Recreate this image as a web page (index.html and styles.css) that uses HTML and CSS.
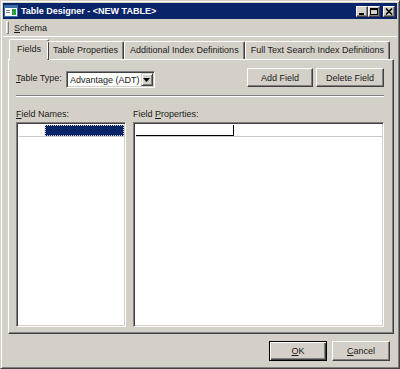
FILE: index.html
```html
<!DOCTYPE html>
<html lang="en">
<head>
    <meta charset="UTF-8">
    <meta name="viewport" content="width=device-width, initial-scale=1.0">
    <title>Table Designer</title>
    <link rel="stylesheet" href="styles.css">
</head>
<body>
    <div class="window">
        <div class="titlebar">
            <svg class="app-icon" width="14" height="12" viewBox="0 0 14 12">
                <rect x="0.5" y="0.5" width="13" height="11" fill="#ffffff" stroke="#3a6ea5"/>
                <rect x="1" y="1" width="12" height="2" fill="#3a6ea5"/>
                <rect x="8" y="4" width="4" height="6" fill="#2e9e3e"/>
                <rect x="2" y="5" width="4" height="1" fill="#808080"/>
                <rect x="2" y="7" width="4" height="1" fill="#808080"/>
            </svg>
            <span class="title">Table Designer - &lt;NEW TABLE&gt;</span>
            <div class="caption-btns">
                <button class="cap-btn">
                    <svg width="8" height="7" viewBox="0 0 8 7"><rect x="1" y="5" width="5" height="2" fill="#000"/></svg>
                </button>
                <button class="cap-btn">
                    <svg width="8" height="7" viewBox="0 0 8 7"><rect x="0.5" y="0.5" width="7" height="6" fill="none" stroke="#000"/><rect x="0" y="0" width="8" height="2" fill="#000"/></svg>
                </button>
                <button class="cap-btn close">
                    <svg width="8" height="7" viewBox="0 0 8 7"><path d="M1 0.5 L7 6.5 M7 0.5 L1 6.5" stroke="#000" stroke-width="1.6"/></svg>
                </button>
            </div>
        </div>

        <div class="menubar">
            <span class="grip"></span>
            <span class="menu-item"><u>S</u>chema</span>
        </div>

        <div class="content">
            <div class="tabs">
                <div class="tab active">Fields</div>
                <div class="tab">Table Properties</div>
                <div class="tab">Additional Index Definitions</div>
                <div class="tab">Full Text Search Index Definitions</div>
            </div>

            <div class="panel">
                <div class="type-row">
                    <span class="field-label"><u>T</u>able Type:</span>
                    <div class="combo">
                        <span class="combo-text">Advantage (ADT)</span>
                        <span class="combo-btn">
                            <svg width="7" height="4" viewBox="0 0 7 4"><path d="M0 0 H7 L3.5 4 Z" fill="#000"/></svg>
                        </span>
                    </div>
                    <div class="spacer"></div>
                    <button class="btn add-btn">Add Field</button>
                    <button class="btn delete-btn">Delete Field</button>
                </div>

                <div class="separator"></div>

                <div class="lists">
                    <div class="list-col names-col">
                        <div class="col-label"><u>F</u>ield Names:</div>
                        <div class="listbox">
                            <div class="grid-row">
                                <span class="row-head"></span>
                                <span class="cell selected"></span>
                            </div>
                        </div>
                    </div>
                    <div class="list-col props-col">
                        <div class="col-label">Field <u>P</u>roperties:</div>
                        <div class="listbox">
                            <div class="grid-row">
                                <span class="cell edit"></span>
                                <span class="cell rest"></span>
                            </div>
                        </div>
                    </div>
                </div>
            </div>
        </div>

        <div class="footer">
            <button class="btn default"><u>O</u>K</button>
            <button class="btn"><u>C</u>ancel</button>
        </div>
    </div>
</body>
</html>
```

FILE: styles.css
```css
* {
    margin: 0;
    padding: 0;
    box-sizing: border-box;
}

body {
    font-family: "Liberation Sans", Arial, sans-serif;
    font-size: 9px;
    color: #1a1a1a;
    background: #d4d0c8;
}

u {
    text-decoration: underline;
    text-underline-offset: 1px;
}

.window {
    width: 400px;
    height: 369px;
    display: flex;
    flex-direction: column;
    background: #d4d0c8;
    border: 1px solid;
    border-color: #d4d0c8 #404040 #404040 #d4d0c8;
    box-shadow: inset 1px 1px 0 #ffffff, inset -1px -1px 0 #808080;
    padding: 2px;
}

/* title bar */
.titlebar {
    height: 16px;
    display: flex;
    align-items: center;
    background: #0a246a;
    padding: 0 2px 0 1px;
}

.app-icon {
    display: block;
    margin-right: 3px;
}

.title {
    color: #ffffff;
    font-weight: bold;
    font-size: 9px;
    flex: 1;
}

.caption-btns {
    display: flex;
}

.cap-btn {
    width: 12px;
    height: 11px;
    display: flex;
    align-items: center;
    justify-content: center;
    background: #d4d0c8;
    border: 1px solid;
    border-color: #ffffff #404040 #404040 #ffffff;
    box-shadow: inset -1px -1px 0 #808080;
}

.cap-btn.close {
    margin-left: 3px;
}

/* menu */
.menubar {
    height: 18px;
    display: flex;
    align-items: center;
    border-bottom: 1px solid #ffffff;
}

.grip {
    width: 3px;
    height: 13px;
    margin-left: 3px;
    border: 1px solid;
    border-color: #ffffff #808080 #808080 #ffffff;
}

.menu-item {
    margin-left: 5px;
}

/* tabs */
.content {
    padding: 2px 3px 0 5px;
}

.tabs {
    display: flex;
    align-items: flex-end;
    height: 20px;
    padding-left: 3px;
    position: relative;
    z-index: 1;
}

.tab {
    height: 18px;
    line-height: 16px;
    padding: 0 5px;
    border: 1px solid;
    border-bottom: none;
    border-color: #ffffff #404040 transparent #ffffff;
    border-radius: 2px 2px 0 0;
    box-shadow: inset -1px 0 0 #808080;
    white-space: nowrap;
}

.tab.active {
    height: 21px;
    line-height: 18px;
    margin: 0 -2px -1px;
    padding: 0 7px;
    background: #d4d0c8;
}

.panel {
    height: 275px;
    border: 1px solid;
    border-color: #ffffff #404040 #404040 #ffffff;
    box-shadow: inset -1px -1px 0 #808080;
    padding: 8px 9px 0 7px;
}

.type-row {
    display: flex;
    align-items: flex-start;
    height: 19px;
}

.field-label {
    margin-top: 5px;
    margin-right: 4px;
}

.combo {
    width: 89px;
    height: 17px;
    margin-top: 3px;
    display: flex;
    align-items: center;
    background: #ffffff;
    border: 1px solid;
    border-color: #808080 #ffffff #ffffff #808080;
    box-shadow: inset 1px 1px 0 #404040, inset -1px -1px 0 #d4d0c8;
    padding: 2px 1px 2px 2px;
}

.combo-text {
    flex: 1;
    padding-left: 1px;
}

.combo-btn {
    width: 12px;
    height: 13px;
    display: flex;
    align-items: center;
    justify-content: center;
    background: #d4d0c8;
    border: 1px solid;
    border-color: #d4d0c8 #404040 #404040 #d4d0c8;
    box-shadow: inset 1px 1px 0 #ffffff, inset -1px -1px 0 #808080;
}

.spacer {
    flex: 1;
}

.btn {
    font-family: "Liberation Sans", Arial, sans-serif;
    font-size: 9px;
    color: #1a1a1a;
    height: 19px;
    background: #d4d0c8;
    border: 1px solid;
    border-color: #ffffff #404040 #404040 #ffffff;
    box-shadow: inset -1px -1px 0 #808080;
}

.add-btn {
    width: 66px;
}

.delete-btn {
    width: 68px;
    margin-left: 3px;
}

.separator {
    margin-top: 8px;
    height: 2px;
    border-top: 1px solid #808080;
    border-bottom: 1px solid #ffffff;
}

/* field lists */
.lists {
    display: flex;
    gap: 7px;
    margin-top: 12px;
}

.names-col {
    width: 110px;
}

.props-col {
    flex: 1;
}

.col-label {
    height: 13px;
}

.listbox {
    height: 205px;
    background: #ffffff;
    border: 1px solid;
    border-color: #808080 #ffffff #ffffff #808080;
    box-shadow: inset 1px 1px 0 #404040, inset -1px -1px 0 #d4d0c8;
    padding: 2px 1px 1px 2px;
}

.grid-row {
    display: flex;
    height: 12px;
    border-bottom: 1px solid #c8c8c8;
}

.row-head {
    width: 26px;
    border-right: 1px solid #e8e8e8;
}

.cell.selected {
    flex: 1;
    background: #0a246a;
    border: 1px dotted #d4d0c8;
}

.cell.edit {
    width: 98px;
    border-right: 1px solid #000;
    border-bottom: 1px solid #000;
}

.cell.rest {
    flex: 1;
}

/* footer */
.footer {
    display: flex;
    justify-content: flex-end;
    gap: 5px;
    padding: 7px 7px 0 0;
}

.footer .btn {
    width: 58px;
    height: 20px;
}

.btn.default {
    border-color: #000;
    box-shadow: inset 1px 1px 0 #ffffff, inset -1px -1px 0 #404040, inset -2px -2px 0 #808080;
}
```
